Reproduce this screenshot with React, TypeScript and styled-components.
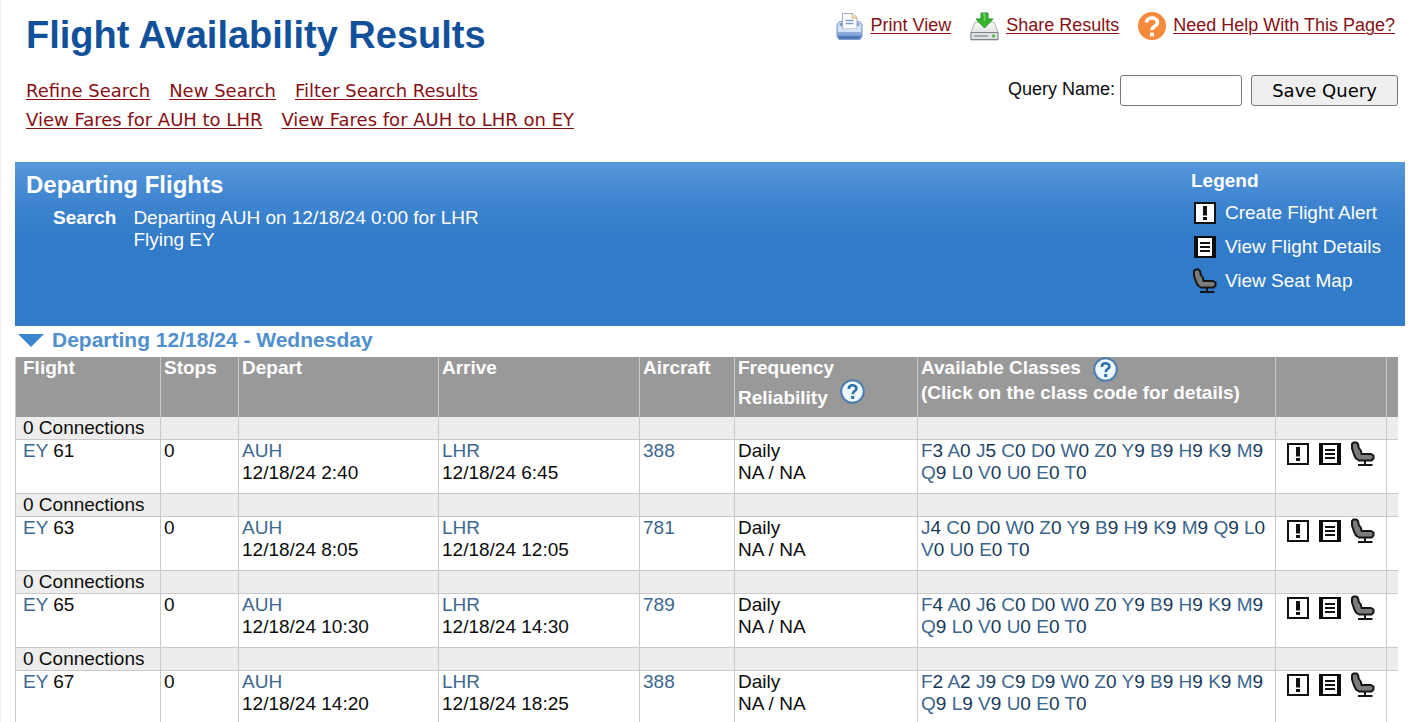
import React from "react";
import styled, { createGlobalStyle, css } from "styled-components";

const GlobalStyle = createGlobalStyle`
  *, *::before, *::after { box-sizing: border-box; }
  body {
    margin: 0;
    background: #fff;
    color: #0c0c0c;
    font: 19px/22px "Liberation Sans", Arial, sans-serif;
  }
  h1, h2, h3, p, dl, dd, ul { margin: 0; padding: 0; }
  svg { display: block; flex: none; }
`;

const Page = styled.div`
  height: 100vh;
  overflow: hidden auto;
  scrollbar-width: none;
  padding: 0 6px 0 14px;
  border-left: 1px solid #f1f1f1;
`;

const Header = styled.header`
  display: flex;
  justify-content: space-between;
  align-items: flex-start;
  height: 162px;
  padding: 12px 7px 0 11px;
`;

const Title = styled.h1`
  color: #11519b;
  font-size: 38px;
  line-height: 46px;
  margin-bottom: 18px;
`;

const LinkRow = styled.nav`
  display: flex;
  gap: 19px;
  font-family: "DejaVu Sans", Verdana, sans-serif;
  font-size: 18px;
  line-height: 29px;
`;

const RedLink = styled.a`
  color: #860f14;
  text-decoration: underline;
  text-underline-offset: 2px;
  text-decoration-thickness: 1px;
`;

const Tools = styled.div`
  display: flex;
  flex-direction: column;
  align-items: flex-end;
  gap: 34px;
`;

const ToolLinks = styled.nav`
  display: flex;
  gap: 19px;
  padding-right: 3px;
`;

const ToolLink = styled(RedLink)`
  display: flex;
  align-items: flex-start;
  gap: 7px;
  font-size: 18px;
  line-height: 27px;
`;

const QueryForm = styled.form`
  display: flex;
  align-items: flex-start;
  font-size: 18px;
`;

const QueryLabel = styled.label`
  margin-right: 5px;
  line-height: 28px;
`;

const QueryInput = styled.input`
  width: 122px;
  height: 31px;
  margin-right: 9px;
  border: 1px solid #767676;
  border-radius: 3px;
  background: #fff;
  font: inherit;
`;

const SaveButton = styled.button`
  width: 147px;
  height: 31px;
  padding: 0;
  border: 1px solid #767676;
  border-radius: 3px;
  background: #efefef;
  color: #000;
  font: 18px/28px "DejaVu Sans", Verdana, sans-serif;
`;

const Banner = styled.section`
  display: flex;
  justify-content: space-between;
  min-height: 164px;
  padding: 7px 26px 0 11px;
  background: linear-gradient(#5797db 0, #3f85d0 38px, #327bc8 76px);
  color: #fff;
`;

const BannerTitle = styled.h2`
  font-size: 24px;
  line-height: 32px;
  margin-bottom: 6px;
`;

const Criteria = styled.dl`
  display: flex;
  gap: 17px;
  padding-left: 27px;
`;

const CriteriaName = styled.dt`
  font-weight: bold;
`;

const CriteriaValue = styled.dd`
  font-size: 19px;
`;

const Legend = styled.div`
  width: 188px;
`;

const LegendTitle = styled.h3`
  font-size: 19px;
  line-height: 24px;
  margin-bottom: 3px;
`;

const LegendList = styled.ul`
  list-style: none;
`;

const LegendItem = styled.li`
  display: flex;
  align-items: center;
  height: 34px;
  white-space: nowrap;
`;

const LegendIcon = styled.span`
  display: flex;
  flex: none;
  justify-content: center;
  width: 28px;
  margin-right: 6px;
`;

const DayHeading = styled.h2`
  display: flex;
  align-items: center;
  gap: 8px;
  height: 31px;
  padding: 0 0 3px 3px;
  color: #4f8fcd;
  font-size: 21px;
`;

const FlightTable = styled.table`
  width: calc(100% - 7px);
  table-layout: fixed;
  border-collapse: separate;
  border-spacing: 0;
  border-left: 1px solid #c9c9c9;
`;

const Col = styled.col<{ $width?: number }>`
  ${(p) => p.$width && css`width: ${p.$width}px;`}
`;

const cell = css`
  padding: 0 3px;
  vertical-align: top;
  text-align: left;
  border-right: 1px solid #c9c9c9;
  &:first-child { padding-left: 7px; }
  &:last-child { border-right: 0; }
`;

const HeadCell = styled.th`
  ${cell}
  height: 60px;
  background: #999;
  color: #fff;
  white-space: nowrap;
`;

const HeadLine = styled.span<{ $height: number; $align?: string }>`
  display: flex;
  align-items: ${(p) => p.$align || "flex-start"};
  gap: 12px;
  height: ${(p) => p.$height}px;
`;

const HelpButton = styled.button`
  align-self: flex-start;
  padding: 0;
  border: 0;
  background: none;
`;

const GroupCell = styled.td`
  ${cell}
  height: 23px;
  background: #ededed;
  border-bottom: 1px solid #c9c9c9;
`;

const FlightCell = styled.td`
  ${cell}
  height: 54px;
  border-bottom: 1px solid #c9c9c9;
`;

const CodeLink = styled.a`
  color: #3c6790;
  text-decoration: none;
`;

const SeatCount = styled.span`
  color: #14385a;
`;

const Actions = styled.div`
  display: flex;
  align-items: center;
  gap: 10px;
  padding: 1px 0 0 8px;
`;

const ActionButton = styled.button`
  display: flex;
  padding: 0;
  border: 0;
  background: none;
`;

const AlertIcon = () => (
  <svg width="22" height="22" viewBox="0 0 22 22">
    <rect x="1" y="1" width="20" height="20" fill="#fff" stroke="#111" strokeWidth="2" />
    <path d="M9 4h4v9.500h-4zM9 15h4v3h-4z" fill="#111" />
  </svg>
);

const DetailsIcon = () => (
  <svg width="22" height="22" viewBox="0 0 22 22">
    <rect width="22" height="22" fill="#0c0c0c" />
    <rect x="4" y="2" width="14" height="18" fill="#fff" />
    <path d="M6 7h10M6 11h10M6 15h10" stroke="#111" strokeWidth="1.800" />
  </svg>
);

const SeatIcon = () => (
  <svg width="24" height="26" viewBox="0 0 24 26">
    <path
      d="M2.500 1.500h3l1.500 1.500 .8 4 2 2.500 .7 3.500h9.500l2.500 1.500v3l-2 2H8l-3-2-2-4-2-6V3z"
      fill="#7c7c7c"
      stroke="#161616"
      strokeWidth="2"
      strokeLinejoin="round"
    />
    <path d="M14 20v4M7 24h14.500" stroke="#161616" strokeWidth="2" />
  </svg>
);

const PrinterIcon = () => (
  <svg width="27" height="28" viewBox="0 0 27 28">
    <defs>
      <linearGradient id="tray" x1="0" y1="0" x2="0" y2="1">
        <stop offset="0" stopColor="#c9daf1" />
        <stop offset="0.500" stopColor="#9fbbe4" />
        <stop offset="1" stopColor="#5f86c6" />
      </linearGradient>
    </defs>
    <path d="M3.500 9.500h20l2.500 3v12l-2 3H3l-2-3v-12z" fill="url(#tray)" stroke="#7f9dcd" />
    <path d="M4.500 11h18v6h-18z" fill="#5f7fae" />
    <path d="M6.500 1.500h10.500l4 4v11.500H6.500z" fill="#fbfcff" stroke="#a5abb8" />
    <path d="M16 1.500v4.500h5" fill="#f6e6a8" stroke="#c9b878" />
    <path d="M9.500 8.500h8M9.500 11.500h8" stroke="#7f9fd0" strokeWidth="1.500" />
    <path d="M2 14h4v3h15v-3h4v6H2z" fill="#d3e2f6" />
    <path d="M2 24h23l-1.500 3h-20z" fill="#4f78ba" />
  </svg>
);

const DownloadIcon = () => (
  <svg width="29" height="29" viewBox="0 0 29 29">
    <defs>
      <linearGradient id="drive" x1="0" y1="0" x2="0" y2="1">
        <stop offset="0" stopColor="#fafafa" />
        <stop offset="1" stopColor="#cfd2d4" />
      </linearGradient>
    </defs>
    <path d="M5 10h19l4 10v8H1v-8z" fill="url(#drive)" stroke="#b0b3b5" />
    <path d="M1 20.500h27v7H1z" fill="#dfe2e4" stroke="#808487" />
    <path d="M4 24h14" stroke="#a8acaf" strokeWidth="2" />
    <path d="M22 22.500h3v3h-3z" fill="#63b957" />
    <path d="M11 1h7v6h5l-8.500 9L6 7h5z" fill="#35b52d" stroke="#249322" />
    <path d="M12.500 2h2v7" fill="none" stroke="#72d664" strokeWidth="1.500" />
  </svg>
);

const OrangeHelpIcon = () => (
  <svg width="28" height="28" viewBox="0 0 28 28">
    <circle cx="14" cy="14" r="14" fill="#f58a3c" />
    <path
      d="M8.500 10.500c0-6 11-6 11 0 0 4-5.500 3.500-5.500 7.500"
      fill="none"
      stroke="#fff"
      strokeWidth="3.600"
    />
    <rect x="12" y="20.500" width="4" height="4" rx="1" fill="#fff" />
  </svg>
);

const BlueHelpIcon = () => (
  <svg width="25" height="25" viewBox="0 0 25 25">
    <circle cx="12.500" cy="12.500" r="11.300" fill="#eef8ff" stroke="#4c7fae" strokeWidth="2" />
    <path
      d="M8.800 10c0-5 7.600-4.600 7.600-.6 0 2.800-3.700 2.600-3.700 5.800"
      fill="none"
      stroke="#2f6ea6"
      strokeWidth="2.600"
    />
    <rect x="11.200" y="17" width="3" height="3" fill="#2f6ea6" />
  </svg>
);

const Triangle = () => (
  <svg width="26" height="13" viewBox="0 0 26 13">
    <path d="M0 0h26L13 13z" fill="#3c86cf" />
  </svg>
);

interface Flight {
  number: number;
  depart: string;
  arrive: string;
  aircraft: string;
  classes: string;
}

const flights: Flight[] = [
  { number: 61, depart: "2:40", arrive: "6:45", aircraft: "388", classes: "F3 A0 J5 C0 D0 W0 Z0 Y9 B9 H9 K9 M9 Q9 L0 V0 U0 E0 T0" },
  { number: 63, depart: "8:05", arrive: "12:05", aircraft: "781", classes: "J4 C0 D0 W0 Z0 Y9 B9 H9 K9 M9 Q9 L0 V0 U0 E0 T0" },
  { number: 65, depart: "10:30", arrive: "14:30", aircraft: "789", classes: "F4 A0 J6 C0 D0 W0 Z0 Y9 B9 H9 K9 M9 Q9 L0 V0 U0 E0 T0" },
  { number: 67, depart: "14:20", arrive: "18:25", aircraft: "388", classes: "F2 A2 J9 C9 D9 W0 Z0 Y9 B9 H9 K9 M9 Q9 L9 V9 U0 E0 T0" },
];

const FlightRows = ({ flight }: { flight: Flight }) => (
  <>
    <tr>
      <GroupCell>0 Connections</GroupCell>
      {Array.from({ length: 8 }, (_, i) => (
        <GroupCell key={i} />
      ))}
    </tr>
    <tr>
      <FlightCell>
        <CodeLink href="#">EY</CodeLink> {flight.number}
      </FlightCell>
      <FlightCell>0</FlightCell>
      <FlightCell>
        <CodeLink href="#">AUH</CodeLink>
        <br />
        12/18/24 {flight.depart}
      </FlightCell>
      <FlightCell>
        <CodeLink href="#">LHR</CodeLink>
        <br />
        12/18/24 {flight.arrive}
      </FlightCell>
      <FlightCell>
        <CodeLink href="#">{flight.aircraft}</CodeLink>
      </FlightCell>
      <FlightCell>
        Daily
        <br />
        NA / NA
      </FlightCell>
      <FlightCell>
        {flight.classes.split(" ").map((code) => (
          <React.Fragment key={code}>
            <CodeLink href="#">
              {code[0]}
              <SeatCount>{code[1]}</SeatCount>
            </CodeLink>{" "}
          </React.Fragment>
        ))}
      </FlightCell>
      <FlightCell>
        <Actions>
          <ActionButton type="button" aria-label="Create Flight Alert"><AlertIcon /></ActionButton>
          <ActionButton type="button" aria-label="View Flight Details"><DetailsIcon /></ActionButton>
          <ActionButton type="button" aria-label="View Seat Map"><SeatIcon /></ActionButton>
        </Actions>
      </FlightCell>
      <FlightCell />
    </tr>
  </>
);

export default function App() {
  return (
    <Page>
      <GlobalStyle />
      <Header>
        <div>
          <Title>Flight Availability Results</Title>
          <LinkRow>
            <RedLink href="#">Refine Search</RedLink>
            <RedLink href="#">New Search</RedLink>
            <RedLink href="#">Filter Search Results</RedLink>
          </LinkRow>
          <LinkRow>
            <RedLink href="#">View Fares for AUH to LHR</RedLink>
            <RedLink href="#">View Fares for AUH to LHR on EY</RedLink>
          </LinkRow>
        </div>
        <Tools>
          <ToolLinks>
            <ToolLink href="#"><PrinterIcon />Print View</ToolLink>
            <ToolLink href="#"><DownloadIcon />Share Results</ToolLink>
            <ToolLink href="#"><OrangeHelpIcon />Need Help With This Page?</ToolLink>
          </ToolLinks>
          <QueryForm onSubmit={(e) => e.preventDefault()}>
            <QueryLabel htmlFor="query-name">Query Name:</QueryLabel>
            <QueryInput id="query-name" type="text" />
            <SaveButton type="submit">Save Query</SaveButton>
          </QueryForm>
        </Tools>
      </Header>

      <Banner>
        <div>
          <BannerTitle>Departing Flights</BannerTitle>
          <Criteria>
            <CriteriaName>Search</CriteriaName>
            <CriteriaValue>
              Departing AUH on 12/18/24 0:00 for LHR
              <br />
              Flying EY
            </CriteriaValue>
          </Criteria>
        </div>
        <Legend>
          <LegendTitle>Legend</LegendTitle>
          <LegendList>
            <LegendItem><LegendIcon><AlertIcon /></LegendIcon>Create Flight Alert</LegendItem>
            <LegendItem><LegendIcon><DetailsIcon /></LegendIcon>View Flight Details</LegendItem>
            <LegendItem><LegendIcon><SeatIcon /></LegendIcon>View Seat Map</LegendItem>
          </LegendList>
        </Legend>
      </Banner>

      <DayHeading><Triangle />Departing 12/18/24 - Wednesday</DayHeading>

      <FlightTable>
        <colgroup>
          <Col $width={145} />
          <Col $width={78} />
          <Col $width={200} />
          <Col $width={201} />
          <Col $width={95} />
          <Col $width={183} />
          <Col />
          <Col $width={111} />
          <Col $width={11} />
        </colgroup>
        <thead>
          <tr>
            <HeadCell>Flight</HeadCell>
            <HeadCell>Stops</HeadCell>
            <HeadCell>Depart</HeadCell>
            <HeadCell>Arrive</HeadCell>
            <HeadCell>Aircraft</HeadCell>
            <HeadCell>
              <HeadLine $height={22}>Frequency</HeadLine>
              <HeadLine $height={30} $align="flex-end">
                Reliability
                <HelpButton type="button" aria-label="About frequency and reliability"><BlueHelpIcon /></HelpButton>
              </HeadLine>
            </HeadCell>
            <HeadCell>
              <HeadLine $height={25}>
                Available Classes
                <HelpButton type="button" aria-label="About available classes"><BlueHelpIcon /></HelpButton>
              </HeadLine>
              <HeadLine $height={22}>(Click on the class code for details)</HeadLine>
            </HeadCell>
            <HeadCell />
            <HeadCell />
          </tr>
        </thead>
        <tbody>
          {flights.map((flight) => (
            <FlightRows key={flight.number} flight={flight} />
          ))}
        </tbody>
      </FlightTable>
    </Page>
  );
}
